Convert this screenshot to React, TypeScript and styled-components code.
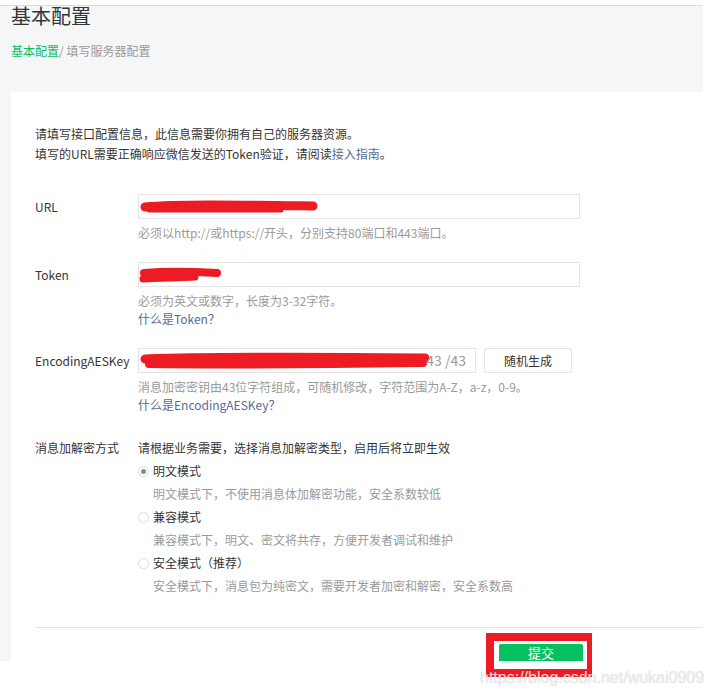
import styled, { createGlobalStyle } from "styled-components";

const GlobalStyle = createGlobalStyle`
  html, body {
    margin: 0;
    padding: 0;
    background: #ffffff;
  }
  body {
    font-family: "Noto Sans CJK SC", "Microsoft YaHei", sans-serif;
    font-size: 12px;
    color: #353535;
  }
`;

interface Mode {
  title: string;
  desc: string;
  checked?: boolean;
}

const modes: Mode[] = [
  {
    title: "明文模式",
    desc: "明文模式下，不使用消息体加解密功能，安全系数较低",
    checked: true,
  },
  {
    title: "兼容模式",
    desc: "兼容模式下，明文、密文将共存，方便开发者调试和维护",
  },
  {
    title: "安全模式（推荐）",
    desc: "安全模式下，消息包为纯密文，需要开发者加密和解密，安全系数高",
  },
];

const App = () => {
  return (
    <Canvas>
      <GlobalStyle />
      <Shot>
        <TopStrip />
        <Main>
          <Title>基本配置</Title>
          <Crumb>
            <span className="home">基本配置</span>/ 填写服务器配置
          </Crumb>
          <Card>
            <Intro>
              <div>请填写接口配置信息，此信息需要你拥有自己的服务器资源。</div>
              <div>
                填写的URL需要正确响应微信发送的Token验证，请阅读
                <Link>接入指南</Link>。
              </div>
            </Intro>

            <Row $mt={30}>
              <Label>URL</Label>
              <Field>
                <Input $width={442}>
                  <Scribble width="200" height="24">
                    <path
                      d="M6 12 C40 9, 100 10, 174 11"
                      stroke="#ed1c24"
                      strokeWidth="9"
                      strokeLinecap="round"
                      fill="none"
                    />
                    <path
                      d="M10 15 L142 15"
                      stroke="#ed1c24"
                      strokeWidth="5"
                      strokeLinecap="round"
                      fill="none"
                    />
                  </Scribble>
                </Input>
                <Hint>必须以http://或https://开头，分别支持80端口和443端口。</Hint>
              </Field>
            </Row>

            <Row $mt={20}>
              <Label>Token</Label>
              <Field>
                <Input $width={442}>
                  <Scribble width="100" height="24">
                    <path
                      d="M5 10 C30 8, 60 9, 78 10"
                      stroke="#ed1c24"
                      strokeWidth="8"
                      strokeLinecap="round"
                      fill="none"
                    />
                    <path
                      d="M4 16 C20 15, 40 15, 56 14"
                      stroke="#ed1c24"
                      strokeWidth="7"
                      strokeLinecap="round"
                      fill="none"
                    />
                  </Scribble>
                </Input>
                <Hint>必须为英文或数字，长度为3-32字符。</Hint>
                <HintLink>什么是Token？</HintLink>
              </Field>
            </Row>

            <Row $mt={20}>
              <Label>EncodingAESKey</Label>
              <Field>
                <InputLine>
                  <Input $width={338}>
                    <Scribble width="300" height="24">
                      <path
                        d="M6 10 C60 8, 180 8, 286 9"
                        stroke="#ed1c24"
                        strokeWidth="9"
                        strokeLinecap="round"
                        fill="none"
                      />
                      <path
                        d="M10 15 C80 16, 200 15, 284 14"
                        stroke="#ed1c24"
                        strokeWidth="8"
                        strokeLinecap="round"
                        fill="none"
                      />
                    </Scribble>
                    <Counter>43 /43</Counter>
                  </Input>
                  <GhostButton>随机生成</GhostButton>
                </InputLine>
                <Hint>
                  消息加密密钥由43位字符组成，可随机修改，字符范围为A-Z，a-z，0-9。
                </Hint>
                <HintLink>什么是EncodingAESKey？</HintLink>
              </Field>
            </Row>

            <Row $mt={23}>
              <Label $lh={22}>消息加解密方式</Label>
              <Field>
                <Lead>请根据业务需要，选择消息加解密类型，启用后将立即生效</Lead>
                {modes.map((m) => (
                  <Option key={m.title}>
                    <OptionTitle>
                      <Radio $checked={m.checked} />
                      {m.title}
                    </OptionTitle>
                    <OptionDesc>{m.desc}</OptionDesc>
                  </Option>
                ))}
              </Field>
            </Row>

            <Footer>
              <SubmitButton>提交</SubmitButton>
            </Footer>
          </Card>
        </Main>
      </Shot>
      <RedMark />
      <Watermark>https://blog.csdn.net/wukai0909</Watermark>
    </Canvas>
  );
};

export default App;

const Canvas = styled.div`
  position: relative;
  width: 712px;
  height: 696px;
  overflow: hidden;
`;

const Shot = styled.div`
  width: 703px;
  height: 661px;
  overflow: hidden;
  display: flex;
  flex-direction: column;
`;

const TopStrip = styled.div`
  height: 5px;
  background: #ffffff;
  border-bottom: 1px solid #dadbde;
  flex-shrink: 0;
`;

const Main = styled.div`
  flex: 1;
  background: #f5f6f8;
  padding-left: 11px;
  display: flex;
  flex-direction: column;
`;

const Title = styled.div`
  font-size: 20px;
  line-height: 20px;
  color: #353535;
`;

const Crumb = styled.div`
  margin-top: 15px;
  font-size: 12px;
  line-height: 20px;
  color: #9a9a9a;

  .home {
    color: #07c160;
  }
`;

const Card = styled.div`
  margin-top: 31px;
  flex: 1;
  background: #ffffff;
  padding: 32px 0 0 24px;
`;

const Intro = styled.div`
  line-height: 20px;
  color: #353535;
`;

const Link = styled.span`
  color: #576b95;
`;

const Row = styled.div<{ $mt: number }>`
  display: grid;
  grid-template-columns: 103px 1fr;
  margin-top: ${(p) => p.$mt}px;
`;

const Label = styled.div<{ $lh?: number }>`
  line-height: ${(p) => p.$lh ?? 25}px;
  color: #353535;
  white-space: nowrap;
`;

const Field = styled.div`
  display: flex;
  flex-direction: column;
  align-items: flex-start;
`;

const InputLine = styled.div`
  display: flex;
  gap: 8px;
  align-items: center;
`;

const Input = styled.div<{ $width: number }>`
  position: relative;
  box-sizing: border-box;
  width: ${(p) => p.$width}px;
  height: 25px;
  border: 1px solid #e4e4e7;
  background: #ffffff;
`;

const Scribble = styled.svg`
  position: absolute;
  left: 0;
  top: 0;
`;

const Counter = styled.span`
  position: absolute;
  right: 9px;
  top: 0;
  line-height: 23px;
  font-size: 14px;
  color: #9a9a9a;
`;

const GhostButton = styled.div`
  box-sizing: border-box;
  width: 88px;
  height: 25px;
  border: 1px solid #e4e4e7;
  border-radius: 2px;
  display: flex;
  align-items: center;
  justify-content: center;
  color: #353535;
  background: #ffffff;
`;

const Hint = styled.div`
  margin-top: 5px;
  line-height: 18px;
  color: #9a9a9a;
`;

const HintLink = styled.div`
  line-height: 18px;
  color: #576b95;
`;

const Lead = styled.div`
  line-height: 22px;
  color: #353535;
`;

const Option = styled.div`
  display: flex;
  flex-direction: column;
`;

const OptionTitle = styled.div`
  display: flex;
  align-items: center;
  gap: 4px;
  line-height: 24px;
  color: #353535;
`;

const Radio = styled.span<{ $checked?: boolean }>`
  box-sizing: border-box;
  width: 11px;
  height: 11px;
  border-radius: 50%;
  border: 1px solid #d9dadc;
  background: #ffffff;
  position: relative;

  &::after {
    content: "";
    display: ${(p) => (p.$checked ? "block" : "none")};
    position: absolute;
    left: 2px;
    top: 2px;
    width: 5px;
    height: 5px;
    border-radius: 50%;
    background: #8a8a8a;
  }
`;

const OptionDesc = styled.div`
  padding-left: 15px;
  line-height: 22px;
  color: #9a9a9a;
`;

const Footer = styled.div`
  margin-top: 30px;
  border-top: 1px solid #e4e4e7;
  padding: 16px 0 0 464px;
`;

const SubmitButton = styled.div`
  width: 84px;
  height: 18px;
  border-radius: 2px 2px 0 0;
  background: #07c160;
  color: #ffffff;
  font-size: 13px;
  line-height: 18px;
  text-align: center;
`;

const RedMark = styled.div`
  position: absolute;
  left: 486px;
  top: 633px;
  box-sizing: border-box;
  width: 106px;
  height: 44px;
  border: 8px solid #ed1c24;
  border-right-width: 5px;
  background: transparent;
  box-shadow: inset 0 -8px 0 0 #ffffff;
`;

const Watermark = styled.div`
  position: absolute;
  left: 480px;
  top: 668px;
  font-family: "Liberation Sans", Arial, sans-serif;
  font-size: 16px;
  line-height: 20px;
  color: rgba(240, 240, 240, 0.85);
  text-shadow: 0 0 1px rgba(150, 150, 150, 0.45);
  white-space: nowrap;
`;
